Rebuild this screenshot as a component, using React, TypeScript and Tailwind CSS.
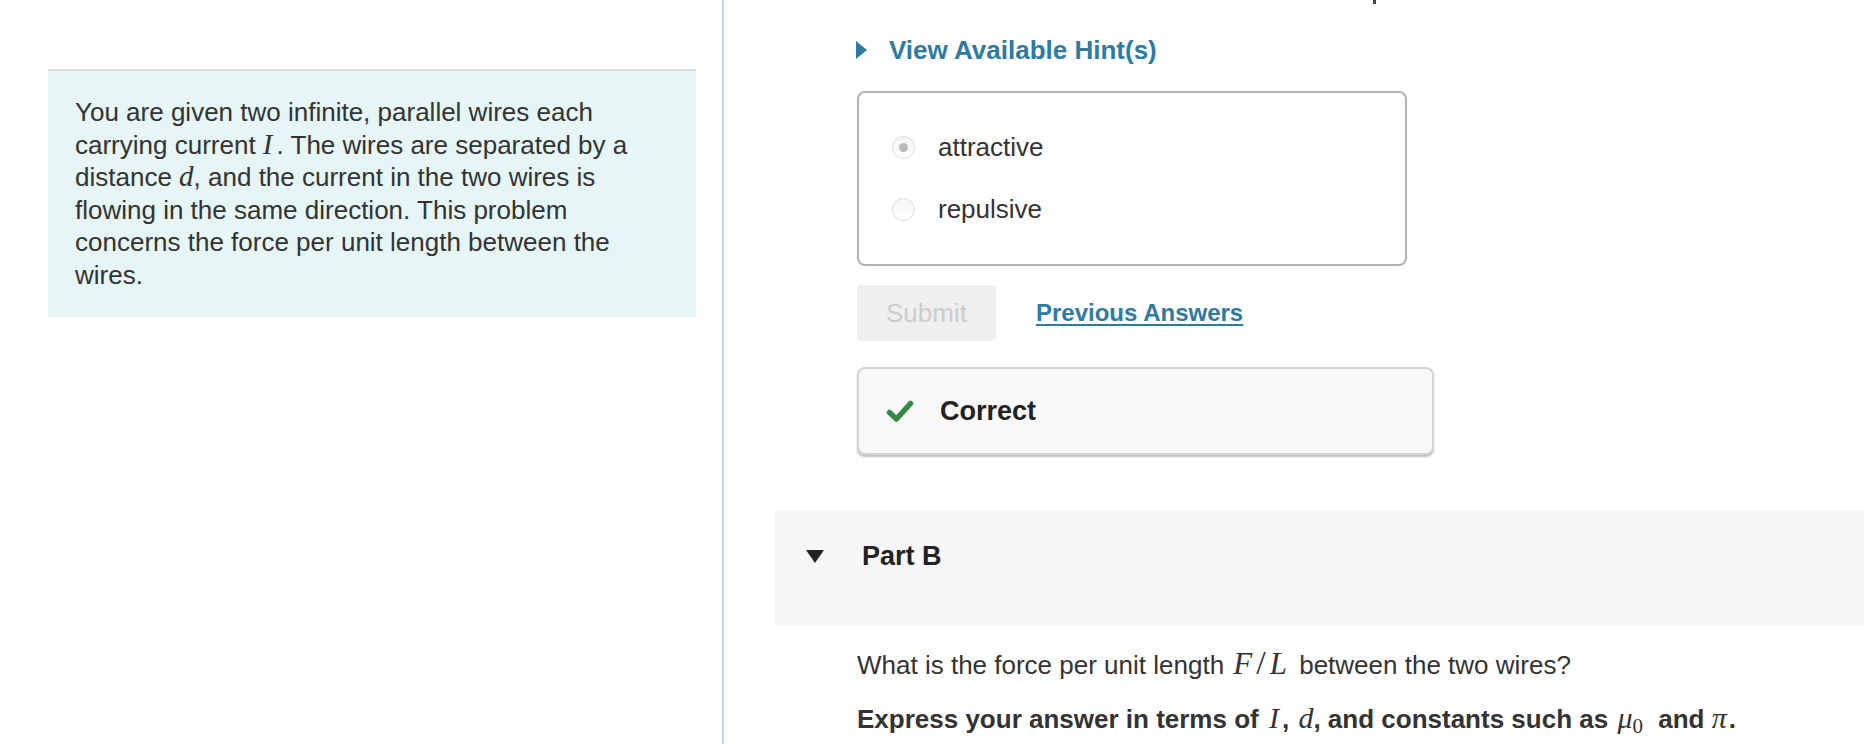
import React from 'react';

const sans = "font-['Liberation_Sans',Arial,Helvetica,sans-serif]";
const math = "font-['Liberation_Serif','Times_New_Roman',serif] italic leading-[0]";

/* Radio option inside the answer box */
function Option({ label, checked }: { label: string; checked?: boolean }) {
  return (
    <div className="flex items-center h-[31px]">
      <div className="w-[23px] h-[23px] rounded-full border border-[#dcdcdc] bg-gradient-to-b from-[#f4f4f4] to-white flex items-center justify-center ml-[33px]">
        {checked && <div className="w-[9px] h-[9px] rounded-full bg-[#b9b9b9]" />}
      </div>
      <span className="ml-[23px] text-[26px] text-[#333]">{label}</span>
    </div>
  );
}

export default function App() {
  return (
    <div className={`flex w-[1864px] h-[744px] overflow-hidden bg-white ${sans}`}>
      {/* ── Left: problem statement ── */}
      <div className="w-[722px] shrink-0 pt-[69px] pl-[48px]">
        <div className="w-[648px] border-t-2 border-[#dcdcdc] bg-[#e6f5f5] pl-[27px] pt-[25px] pb-[26px] text-[26px] leading-[32.5px] text-[#333]">
          You are given two infinite, parallel wires each
          <br />
          carrying current <span className={`${math} text-[29px] mr-[4px]`}>I</span>. The wires are separated by a
          <br />
          distance <span className={`${math} text-[29px]`}>d</span>, and the current in the two wires is
          <br />
          flowing in the same direction. This problem
          <br />
          concerns the force per unit length between the
          <br />
          wires.
        </div>
      </div>

      {/* ── Divider ── */}
      <div className="w-[2px] shrink-0 bg-[#c9d3e5]" />

      {/* ── Right: Part A result + Part B ── */}
      <div className="flex-1 flex flex-col">
        <div className="h-[4px] shrink-0 flex">
          <div className="ml-[649px] w-[3px] h-[4px] bg-[#444]" />
        </div>

        {/* Hint toggle */}
        <div className="flex items-center mt-[30px] ml-[132px] h-[32px] shrink-0">
          <svg width="12" height="18" viewBox="0 0 12 18">
            <path d="M0 0 L11 9 L0 18 Z" fill="#2f7a9f" />
          </svg>
          <span className="ml-[21px] text-[26px] font-bold text-[#2f7a9f]">View Available Hint(s)</span>
        </div>

        {/* Answer options */}
        <div className="mt-[25px] ml-[133px] w-[550px] h-[175px] shrink-0 border-2 border-[#b3b3b3] rounded-[8px] flex flex-col pt-[39px] gap-[31px]">
          <Option label="attractive" checked />
          <Option label="repulsive" />
        </div>

        {/* Submit row */}
        <div className="flex items-center mt-[19px] ml-[133px] shrink-0">
          <div className="w-[139px] h-[56px] rounded-[4px] bg-[#efefef] flex items-center justify-center text-[26px] text-[#cdcdcd]">
            Submit
          </div>
          <span className="ml-[40px] text-[24px] font-bold text-[#2f7a9f] underline underline-offset-[3px] decoration-2">
            Previous Answers
          </span>
        </div>

        {/* Feedback */}
        <div className="mt-[26px] ml-[133px] w-[577px] h-[88px] shrink-0 rounded-[8px] border-2 border-[#d4d4d4] bg-[#f8f8f8] shadow-[0_2px_2px_#bdbdbd] flex items-center">
          <svg width="28" height="24" viewBox="0 0 28 24" className="ml-[27px]">
            <path d="M3.5 13.5 L10.5 20 L24.5 4.5" fill="none" stroke="#358a43" strokeWidth="5.5" strokeLinecap="round" strokeLinejoin="round" />
          </svg>
          <span className="ml-[26px] text-[27px] font-bold text-[#222]">Correct</span>
        </div>

        {/* Part B header */}
        <div className="mt-[56px] ml-[51px] h-[114px] shrink-0 bg-[#f7f7f7] flex items-start pt-[28px]">
          <div className="flex items-center h-[34px]">
            <svg width="18" height="13" viewBox="0 0 18 13" className="ml-[31px]">
              <path d="M0 0 L18 0 L9 13 Z" fill="#222" />
            </svg>
            <span className="ml-[38px] text-[27px] font-bold text-[#222]">Part B</span>
          </div>
        </div>

        {/* Part B question */}
        <div className="ml-[133px] mt-[24px] text-[26px] leading-[33px] text-[#333] shrink-0">
          What is the force per unit length{' '}
          <span className={`${math} text-[31px] ml-[2px]`}>F</span>
          <span className="font-['Liberation_Serif',serif] text-[34px] leading-[0] mx-[4px]">/</span>
          <span className={`${math} text-[31px] mr-[5px]`}>L</span> between the two wires?
        </div>
        <div className="ml-[133px] mt-[21px] text-[26px] leading-[33px] font-bold text-[#333] shrink-0">
          Express your answer in terms of <span className={`${math} font-normal text-[30px] ml-[3px] mr-[3px]`}>I</span>,{' '}
          <span className={`${math} font-normal text-[30px] ml-[2px]`}>d</span>, and constants such as{' '}
          <span className={`${math} font-normal text-[30px] ml-[2px]`}>μ</span>
          <span className="font-['Liberation_Serif',serif] font-normal text-[21px] leading-[0] relative top-[5px] mr-[8px]">0</span> and{' '}
          <span className={`${math} font-normal text-[30px] mr-[2px]`}>π</span>.
        </div>
      </div>
    </div>
  );
}
